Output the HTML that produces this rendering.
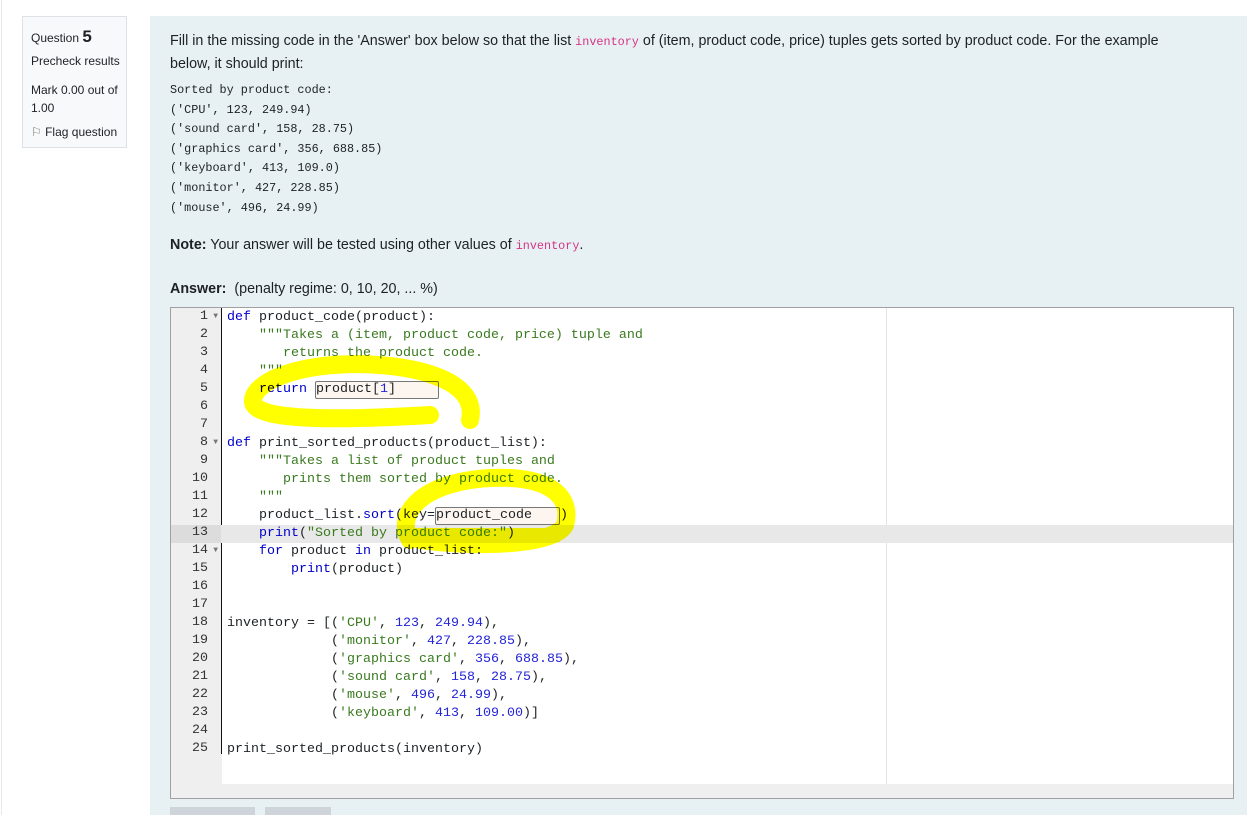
<!DOCTYPE html>
<html><head><meta charset="utf-8">
<style>
*{margin:0;padding:0;box-sizing:border-box}
body{width:1247px;height:815px;overflow:hidden;background:#fff;font-family:"Liberation Sans",sans-serif;color:#1d2125;position:relative}
.abs{position:absolute}
.info{left:22px;top:16px;width:105px;height:132px;background:#f8f9fa;border:1px solid #dee2e6;font-size:12px;color:#1d2125}
.panel{left:150px;top:16px;width:1097px;height:799px;background:#e7f1f4}
.mono{font-family:"Liberation Mono",monospace}
.out{font-size:11.8px;color:#1d2125;left:170px;line-height:19.6px;top:81px;white-space:pre}
.editor{left:170px;top:307px;width:1064px;height:492px;border:1px solid #a0a0a0;background:#efefef}
.code{font-family:"Liberation Mono",monospace;font-size:13.33px;white-space:pre;line-height:18px}
.k{color:#0000cc}.s{color:#3a7a1f}.n{color:#2424d8}.d{color:#1d2125}
.ln{width:50px;height:18px;line-height:18px;color:#333;font-family:"Liberation Mono",monospace;font-size:13.33px;position:relative}
.ln b{position:absolute;right:12px;font-weight:normal}
.ln i{position:absolute;right:2px;font-style:normal;font-size:8px;color:#777}
</style></head><body>
<div class="abs" style="left:1px;top:0;width:1px;height:815px;background:#e8e8e8"></div>
<div class="abs info">
<div class="abs" style="left:8px;top:10px;font-size:12px">Question <b style="font-size:17px">5</b></div>
<div class="abs" style="left:8px;top:37px">Precheck results</div>
<div class="abs" style="left:8px;top:64px;line-height:18px">Mark 0.00 out of<br>1.00</div>
<div class="abs" style="left:8px;top:108px"><span style="color:#777">⚐</span> Flag question</div>
</div>
<div class="abs panel"></div>
<div class="abs" style="left:170px;top:30px;font-size:14.3px;line-height:22px;width:1010px">Fill in the missing code in the 'Answer' box below so that the list <span class="mono" style="color:#d63384;font-size:11.8px">inventory</span> of (item, product code, price) tuples gets sorted by product code. For the example below, it should print:</div>
<div class="abs mono out">Sorted by product code:
('CPU', 123, 249.94)
('sound card', 158, 28.75)
('graphics card', 356, 688.85)
('keyboard', 413, 109.0)
('monitor', 427, 228.85)
('mouse', 496, 24.99)</div>
<div class="abs" style="left:170px;top:237px;font-size:14.3px"><b>Note:</b> Your answer will be tested using other values of <span class="mono" style="color:#d63384;font-size:11.8px">inventory</span>.</div>
<div class="abs" style="left:170px;top:281px;font-size:14.3px"><b>Answer:</b>&nbsp; (penalty regime: 0, 10, 20, ... %)</div>
<div class="abs editor">
<div class="abs" style="left:51px;top:0;width:1011px;height:476px;background:#fff"></div>
<div class="abs" style="left:50px;top:0;width:1px;height:446px;background:#111"></div>
<div class="abs" style="left:715px;top:0;width:1px;height:476px;background:#e4e4e4"></div>
<div class="abs" style="left:0;top:217px;width:1062px;height:18px;background:#e8e8e8"></div>
<div class="abs" style="left:0;top:217px;width:50px;height:18px;background:#dcdcdc"></div>
</div>
<div class="abs" style="left:170px;top:308px"><div class="ln"><b>1</b><i>▼</i></div><div class="ln"><b>2</b></div><div class="ln"><b>3</b></div><div class="ln"><b>4</b></div><div class="ln"><b>5</b></div><div class="ln"><b>6</b></div><div class="ln"><b>7</b></div><div class="ln"><b>8</b><i>▼</i></div><div class="ln"><b>9</b></div><div class="ln"><b>10</b></div><div class="ln"><b>11</b></div><div class="ln"><b>12</b></div><div class="ln"><b>13</b></div><div class="ln"><b>14</b><i>▼</i></div><div class="ln"><b>15</b></div><div class="ln"><b>16</b></div><div class="ln"><b>17</b></div><div class="ln"><b>18</b></div><div class="ln"><b>19</b></div><div class="ln"><b>20</b></div><div class="ln"><b>21</b></div><div class="ln"><b>22</b></div><div class="ln"><b>23</b></div><div class="ln"><b>24</b></div><div class="ln"><b>25</b></div></div>
<div class="abs code d" style="left:227px;top:309px"><span class="k">def</span> product_code(product):
    <span class="s">"""Takes a (item, product code, price) tuple and</span>
<span class="s">       returns the product code.</span>
<span class="s">    """</span>
    <span class="k">return</span> <span style="border:1px solid #777;border-radius:2px;background:#fdf5f0;display:inline-block;width:124px;line-height:16px">product[<span class="n">1</span>]</span>


<span class="k">def</span> print_sorted_products(product_list):
    <span class="s">"""Takes a list of product tuples and</span>
<span class="s">       prints them sorted by product code.</span>
<span class="s">    """</span>
    product_list.<span class="k">sort</span>(key=<span style="border:1px solid #777;border-radius:2px;background:#fdf5f0;display:inline-block;width:125px;line-height:16px">product_code</span>)
    <span class="k">print</span>(<span class="s">"Sorted by product code:"</span>)
    <span class="k">for</span> product <span class="k">in</span> product_list:
        <span class="k">print</span>(product)


inventory = [(<span class="s">'CPU'</span>, <span class="n">123</span>, <span class="n">249.94</span>),
             (<span class="s">'monitor'</span>, <span class="n">427</span>, <span class="n">228.85</span>),
             (<span class="s">'graphics card'</span>, <span class="n">356</span>, <span class="n">688.85</span>),
             (<span class="s">'sound card'</span>, <span class="n">158</span>, <span class="n">28.75</span>),
             (<span class="s">'mouse'</span>, <span class="n">496</span>, <span class="n">24.99</span>),
             (<span class="s">'keyboard'</span>, <span class="n">413</span>, <span class="n">109.00</span>)]

print_sorted_products(inventory)</div>
<svg class="abs" style="left:0;top:0;mix-blend-mode:multiply" width="1247" height="815">
<path d="M470 420 C478 385,430 366,360 364 C290 364,252 384,253 402 C255 420,330 421,430 415" fill="none" stroke="#ffff00" stroke-width="18" stroke-linecap="round"/>
<path d="M410 540 C395 515,420 482,490 478 C555 475,572 500,565 525 C555 545,480 548,420 540" fill="none" stroke="#ffff00" stroke-width="18" stroke-linecap="round"/>
<path d="M405 535 L560 535" stroke="#ffff00" stroke-width="14"/>
</svg>
<div class="abs" style="left:170px;top:807px;width:85px;height:8px;background:#ced4da"></div>
<div class="abs" style="left:265px;top:807px;width:66px;height:8px;background:#ced4da"></div>
</body></html>
